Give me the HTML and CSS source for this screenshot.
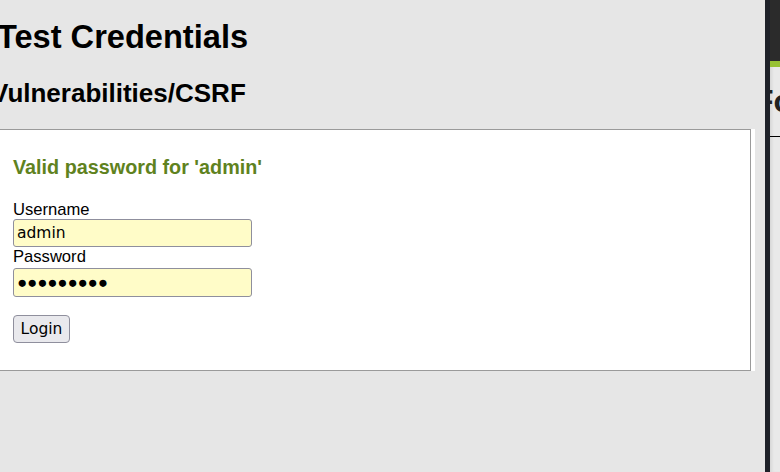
FILE: index.html
```html
<!DOCTYPE html>
<html>
<head>
<meta charset="utf-8">
<title>Test Credentials</title>
<link rel="stylesheet" href="styles.css">
</head>
<body>
<div class="screen">
  <div class="popup">
    <div class="content">
      <h1 class="title">Test Credentials</h1>
      <h2 class="subtitle">Vulnerabilities/CSRF</h2>
      <div class="box">
        <h3 class="valid">Valid password for 'admin'</h3>
        <form class="login-form">
          <label class="label" for="user">Username</label>
          <input class="field" id="user" type="text" value="admin">
          <label class="label label-pass">Password</label>
          <div class="field field-pass" role="textbox" aria-label="Password">●●●●●●●●●</div>
          <button class="btn" type="button">Login</button>
        </form>
      </div>
    </div>
  </div>
  <div class="divider"></div>
  <div class="behind">
    <div class="behind-header"></div>
    <div class="behind-accent"></div>
    <div class="behind-title">Form</div>
  </div>
</div>
</body>
</html>
```

FILE: styles.css
```css
html, body {
  margin: 0;
  padding: 0;
}
body {
  width: 780px;
  height: 472px;
  overflow: hidden;
  background: #e6e6e6;
  font-family: "Liberation Sans", Arial, sans-serif;
  color: #000;
}
.screen {
  display: flex;
  height: 472px;
}
.popup {
  flex: none;
  width: 765px;
  overflow: hidden;
}
.content {
  margin-left: -3px;
}
.title {
  margin: 0;
  padding-top: 18px;
  font-size: 32.6px;
  font-weight: 700;
  line-height: normal;
  white-space: nowrap;
}
.subtitle {
  margin: 22px 0 0 -6px;
  font-size: 26px;
  font-weight: 700;
  line-height: normal;
  white-space: nowrap;
}
.box {
  box-sizing: border-box;
  width: 764px;
  margin: 20px 0 0 -10px;
  padding: 26px 20px 27px 25px;
  background: #fff;
  border: 1px solid #9a9a9a;
  box-shadow: 4px 0 0 #fff;
}
.valid {
  margin: 0 0 22px;
  font-size: 19.8px;
  font-weight: 700;
  line-height: normal;
  color: #5f821e;
  white-space: nowrap;
}
.login-form {
  display: flex;
  flex-direction: column;
  align-items: flex-start;
}
.label {
  display: block;
  font-size: 16.6px;
  line-height: 18px;
}
.field {
  box-sizing: border-box;
  display: block;
  width: 239px;
  height: 28px;
  margin: 0 0 1px;
  padding: 0 3px;
  border: 1px solid #8f8f9d;
  border-radius: 3px;
  background: #fffcc8;
  font-family: "DejaVu Sans", sans-serif;
  font-size: 15.5px;
  color: #000;
  outline: none;
}
.label-pass {
  margin-bottom: 2px;
}
.field-pass {
  height: 29px;
  display: flex;
  align-items: center;
  padding-left: 3px;
  font-family: "Liberation Sans", sans-serif;
  font-size: 16.7px;
  letter-spacing: 0;
}
.btn {
  box-sizing: border-box;
  margin-top: 17px;
  width: 57px;
  height: 28px;
  padding: 0;
  border: 1px solid #8f8f9d;
  border-radius: 4px;
  background: #e9e9ed;
  font-family: "DejaVu Sans", sans-serif;
  font-size: 15.5px;
  color: #000;
}
.divider {
  flex: none;
  width: 5px;
  background: #1e2129;
}
.behind {
  flex: 1;
  overflow: hidden;
  background: #e9e9e9;
  box-shadow: inset 3px 0 3px -1px rgba(0, 0, 0, 0.08);
}
.behind-header {
  height: 61px;
  background: #2b2b2b;
}
.behind-accent {
  height: 6px;
  background: #98c234;
}
.behind-title {
  margin: 16px 0 0 -16px;
  padding-bottom: 16px;
  border-bottom: 1px solid #000;
  font-size: 32px;
  font-weight: 700;
  line-height: normal;
  color: #222;
  white-space: nowrap;
}
```
